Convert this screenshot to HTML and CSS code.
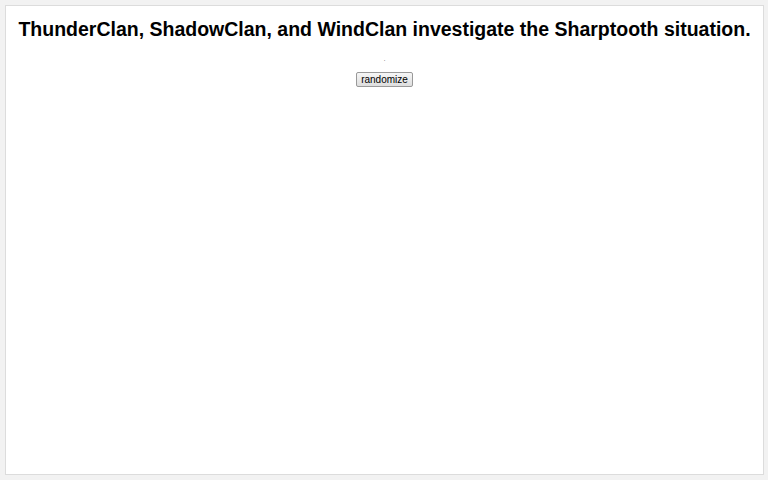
FILE: index.html
```html
<!DOCTYPE html>
<html>
<head>
<meta charset="utf-8">
<link rel="stylesheet" href="styles.css">
</head>
<body>
<div class="page">
  <h1 class="title">ThunderClan, ShadowClan, and WindClan investigate the Sharptooth situation.</h1>
  <p class="dot">.</p>
  <div class="actions"><button class="btn">randomize</button></div>
</div>
</body>
</html>
```
FILE: styles.css
```css
html, body {
  margin: 0;
  padding: 0;
  background: #f2f2f2;
}
.page {
  margin: 5px 4px 0 5px;
  height: 468px;
  background: #fff;
  border: 1px solid #dcdcdc;
  font-family: "Liberation Sans", Arial, sans-serif;
  text-align: center;
}
.title {
  font-size: 19.5px;
  font-weight: bold;
  margin: 12px 0 0;
  line-height: 22px;
  color: #000;
}
.dot {
  font-size: 6px;
  line-height: 8px;
  margin: 15px 0 0;
  color: #000;
}
.actions {
  margin-top: 6px;
}
.btn {
  font-family: "Liberation Sans", Arial, sans-serif;
  font-size: 10px;
  padding: 1px 4px;
  border: 1px solid #999;
  border-radius: 2px;
  background: linear-gradient(#f6f6f6, #dedede);
  color: #000;
}
```
